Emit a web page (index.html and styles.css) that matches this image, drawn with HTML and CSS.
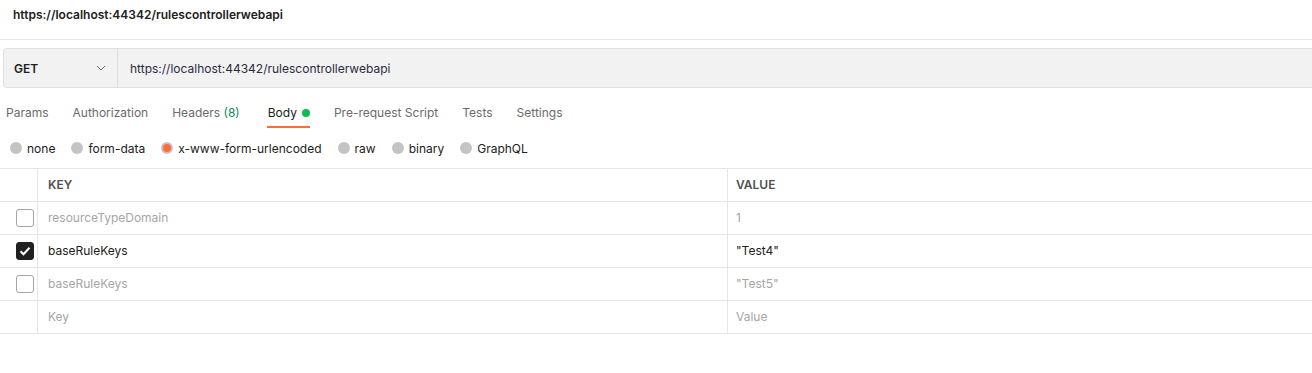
FILE: index.html
```html
<!DOCTYPE html>
<html>
<head>
<meta charset="utf-8">
<link rel="stylesheet" href="styles.css">
</head>
<body>
<div class="page">
  <div class="title">https://localhost:44342/rulescontrollerwebapi</div>
  <div class="reqbar">
    <div class="method">
      <span class="method-name">GET</span>
      <svg class="chev" width="10" height="6" viewBox="0 0 10 6"><path d="M1 1l4 4 4-4" fill="none" stroke="#6b6b6b" stroke-width="1"/></svg>
    </div>
    <div class="url">https://localhost:44342/rulescontrollerwebapi</div>
  </div>
  <div class="tabs">
    <span class="tab">Params</span>
    <span class="tab">Authorization</span>
    <span class="tab tab-headers">Headers <span class="count">(8)</span></span>
    <span class="tab active">Body<span class="dot"></span></span>
    <span class="tab">Pre-request Script</span>
    <span class="tab">Tests</span>
    <span class="tab">Settings</span>
  </div>
  <div class="radios">
    <label class="radio"><span class="rb"></span>none</label>
    <label class="radio"><span class="rb"></span>form-data</label>
    <label class="radio"><span class="rb on"></span>x-www-form-urlencoded</label>
    <label class="radio"><span class="rb"></span>raw</label>
    <label class="radio"><span class="rb"></span>binary</label>
    <label class="radio"><span class="rb"></span>GraphQL</label>
  </div>
  <div class="table">
    <div class="row head">
      <div class="c0"></div>
      <div class="c1">KEY</div>
      <div class="c2">VALUE</div>
    </div>
    <div class="row dim">
      <div class="c0"><span class="cb"></span></div>
      <div class="c1">resourceTypeDomain</div>
      <div class="c2">1</div>
    </div>
    <div class="row">
      <div class="c0"><span class="cb checked"><svg width="12" height="10" viewBox="0 0 12 10"><path d="M1.5 5.2l3 3 6-6.4" fill="none" stroke="#fff" stroke-width="2"/></svg></span></div>
      <div class="c1">baseRuleKeys</div>
      <div class="c2">"Test4"</div>
    </div>
    <div class="row dim">
      <div class="c0"><span class="cb"></span></div>
      <div class="c1">baseRuleKeys</div>
      <div class="c2">"Test5"</div>
    </div>
    <div class="row dim">
      <div class="c0"></div>
      <div class="c1">Key</div>
      <div class="c2">Value</div>
    </div>
  </div>
</div>
</body>
</html>
```
FILE: styles.css
```css
* { box-sizing: border-box; }
html, body { margin: 0; padding: 0; background: #fff; }
body { font-family: Inter, "Noto Sans", sans-serif; color: #212121; font-size: 12px; }
.page { width: 1312px; }
.title {
  height: 40px;
  padding: 7px 0 0 13px;
  font-weight: 600;
  font-size: 12px;
  color: #212121;
  border-bottom: 1px solid #e6e6e6;
}
.reqbar {
  margin: 8px 0 0 3px;
  height: 40px;
  display: flex;
  background: #f2f2f2;
  border: 1px solid #e0e0e0;
  border-right: none;
  border-radius: 4px 0 0 4px;
}
.method {
  width: 114px;
  display: flex;
  align-items: center;
  justify-content: space-between;
  padding: 0 11px 0 10px;
  border-right: 1px solid #e0e0e0;
}
.method-name { font-weight: 600; font-size: 12px; color: #212121; }
.chev { display: block; }
.url { display: flex; align-items: center; padding-left: 12px; font-size: 12px; color: #2b2b3e; }
.tabs {
  display: flex;
  gap: 24px;
  padding: 0 0 0 6px;
  height: 40px;
  align-items: flex-start;
}
.tab {
  padding-top: 17px;
  height: 40px;
  color: #6b6b6b;
  font-size: 12px;
  position: relative;
  white-space: pre;
}
.tab-headers { margin-right: 4px; }
.tab .count { color: #0d8a5e; }
.tab.active { color: #212121; }
.tab.active::after {
  content: "";
  position: absolute;
  left: -1px; right: 0; bottom: 0;
  height: 2px;
  background: #ff6c37;
}
.dot {
  display: inline-block;
  width: 8px; height: 8px;
  border-radius: 50%;
  background: #0cbb52;
  margin-left: 5px;
  vertical-align: 0px;
}
.radios {
  display: flex;
  gap: 16px;
  padding: 0 0 0 10px;
  height: 40px;
  align-items: center;
}
.radio { display: flex; align-items: center; gap: 5px; color: #212121; font-size: 12px; }
.rb { width: 12px; height: 12px; border-radius: 50%; background: #c4c4c4; display: inline-block; }
.rb.on { background: #ff6c37; border: 2px solid #c4c4c4; }
.table { border-top: 1px solid #e6e6e6; }
.row { display: flex; height: 33px; border-bottom: 1px solid #e6e6e6; }
.row > div { display: flex; align-items: center; font-size: 12px; padding-bottom: 1px; }
.c0 { width: 38px; border-right: 1px solid #e6e6e6; padding-left: 16px; }
.c1 { width: 690px; border-right: 1px solid #e6e6e6; padding-left: 10px; }
.c2 { flex: 1; padding-left: 8px; }
.head > div { font-weight: 600; color: #505050; font-size: 12px; }
.dim > div { color: #a6a6a6; }
.cb {
  width: 18px; height: 18px;
  border: 1px solid #a6a6a6;
  border-radius: 3px;
  display: flex; align-items: center; justify-content: center;
}
.cb.checked { background: #212121; border-color: #212121; }
```
